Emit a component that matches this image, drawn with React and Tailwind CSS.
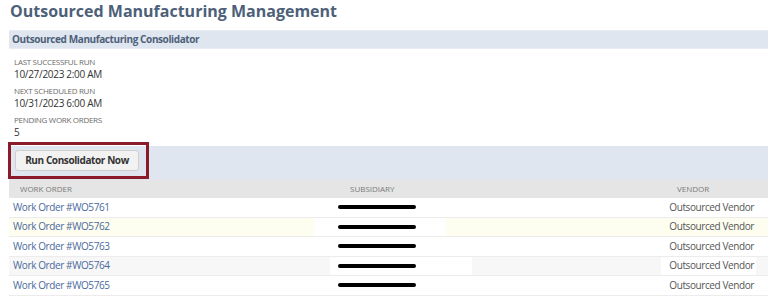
const fields = [
  { label: "Last Successful Run", value: "10/27/2023 2:00 AM" },
  { label: "Next Scheduled Run", value: "10/31/2023 6:00 AM" },
  { label: "Pending Work Orders", value: "5" },
];

const rows = [
  { id: "WO5761", bg: "bg-white", patch: "-ml-[16px] w-[132px] pl-[24px]", vendor: "" },
  { id: "WO5762", bg: "bg-[#fdfdf0]", patch: "-ml-[16px] w-[132px] pl-[24px] bg-white", vendor: "" },
  { id: "WO5763", bg: "bg-white", patch: "-ml-[16px] w-[132px] pl-[24px]", vendor: "" },
  { id: "WO5764", bg: "bg-[#f7f7f7]", patch: "w-[142px] pl-[8px] bg-white", vendor: "bg-white" },
  { id: "WO5765", bg: "bg-white", patch: "-ml-[16px] w-[132px] pl-[24px]", vendor: "" },
];

const Redacted = () => (
  <div className="h-[4px] w-[78px] rounded-full bg-black" />
);

export default function App() {
  return (
    <div className="w-[768px] h-[302px] overflow-hidden bg-white font-['Open_Sans',sans-serif] whitespace-nowrap">
      <h1 className="pl-[10px] text-[16px] font-bold leading-[22px] text-[#4d5f79]">
        Outsourced Manufacturing Management
      </h1>

      <div className="ml-[9px] mt-[8px]">
        {/* Section header */}
        <div className="flex h-[19px] items-center border-y border-[#e8edf3] bg-[#dfe6ef] pl-[3px] text-[10px] font-bold tracking-[-0.4px] text-[#4d5f79]">
          Outsourced Manufacturing Consolidator
        </div>

        {/* Fields */}
        <div className="pl-[5px] pt-[7px]">
          {fields.map((f) => (
            <div key={f.label} className="mb-[5px]">
              <div className="text-[8px] uppercase leading-[12px] tracking-[-0.3px] text-[#6b6b6b]">
                {f.label}
              </div>
              <div className="text-[10px] leading-[12px] tracking-[-0.3px] text-[#333]">
                {f.value}
              </div>
            </div>
          ))}
        </div>

        {/* Button bar */}
        <div className="mt-[8px] h-[34px] bg-[#dfe6ef]">
          <div className="-ml-[1px] -mt-[4px] inline-flex h-[37px] w-[141px] items-center border-[3px] border-[#8b1a2b] pl-[4px]">
            <button className="h-[21px] w-[124px] rounded-[3px] border border-[#cfcfcf] bg-[#f2f2f2] text-[10px] font-bold tracking-[-0.4px] text-[#333]">
              Run Consolidator Now
            </button>
          </div>
        </div>

        {/* Table */}
        <div className="grid grid-cols-[321px_330px_1fr] h-[18px] items-center bg-[#e5e5e5] text-[8px] uppercase text-[#7a7a7a]">
          <div className="pl-[11px]">Work Order</div>
          <div className="pl-[20px]">Subsidiary</div>
          <div className="pl-[17px]">Vendor</div>
        </div>
        {rows.map((r) => (
          <div
            key={r.id}
            className={`grid grid-cols-[321px_330px_1fr] h-[19.5px] items-center border-b border-[#ececec] text-[10px] tracking-[-0.4px] ${r.bg}`}
          >
            <div className="pl-[4px] text-[#4a6a9c]">Work Order #{r.id}</div>
            <div className="flex h-full items-center">
              <div className={`flex h-full items-center ${r.patch}`}>
                <Redacted />
              </div>
            </div>
            <div className="flex h-full items-center justify-end pr-[12px]">
              <div className={`flex h-full items-center pl-[8px] pr-[2px] text-[#555] ${r.vendor}`}>
                Outsourced Vendor
              </div>
            </div>
          </div>
        ))}
      </div>
    </div>
  );
}
